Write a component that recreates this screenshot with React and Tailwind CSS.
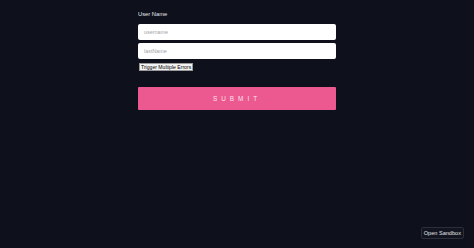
import React from 'react';

const App = () => {
  return (
    <div className="min-h-screen w-full bg-[#0e101c] font-['Liberation_Sans',Arial,sans-serif] text-white">
      <form className="mx-auto w-[198px] pt-[10px]" onSubmit={(e) => e.preventDefault()}>
        <label className="mb-[6px] block text-[5.8px] leading-[8px] text-[#e8e8ec]">User Name</label>
        <input
          placeholder="username"
          className="mb-[3px] block h-[16px] w-full rounded-[2px] border-0 bg-white px-[6px] text-[5.4px] text-black outline-none placeholder:text-[#a4a4a8]"
        />
        <input
          placeholder="lastName"
          className="mb-[4px] block h-[16px] w-full rounded-[2px] border-0 bg-white px-[6px] text-[5.4px] text-black outline-none placeholder:text-[#a4a4a8]"
        />
        <button
          type="button"
          className="ml-[1px] block h-[8px] border border-[#9a9a9a] bg-[#f3f3f3] px-[1px] text-[5.1px] leading-[6px] text-black"
        >
          Trigger Multiple Errors
        </button>
        <button
          type="submit"
          className="mt-[16px] block h-[23px] w-full rounded-[1px] bg-[#ec5990] text-center text-[6.4px] uppercase tracking-[4px] text-[#fbe3ec]"
        >
          Submit
        </button>
      </form>
      <button
        type="button"
        className="fixed bottom-[9px] right-[10px] h-[12px] rounded-[2px] border border-[#2c2e3a] bg-[#12141f] px-[2px] text-[5.6px] leading-[10px] text-[#e4e4e8]"
      >
        Open Sandbox
      </button>
    </div>
  );
};

export default App;
